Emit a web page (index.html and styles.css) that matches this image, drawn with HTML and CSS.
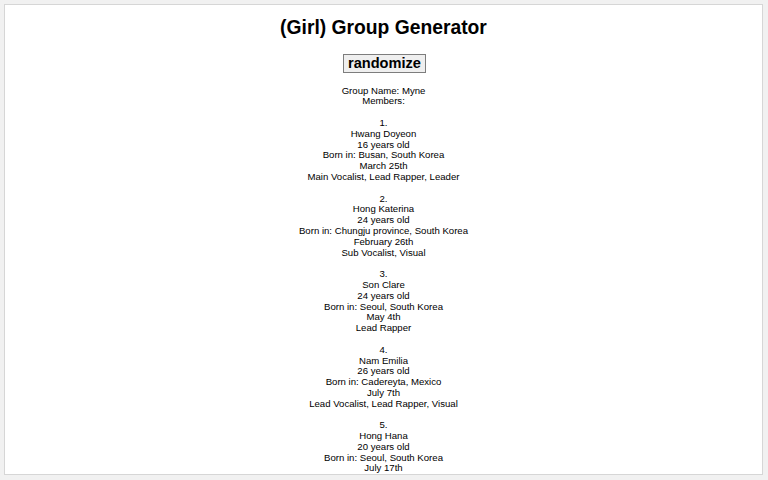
FILE: index.html
```html
<!DOCTYPE html>
<html lang="en">
<head>
<meta charset="utf-8">
<title>(Girl) Group Generator</title>
<link rel="stylesheet" href="styles.css">
</head>
<body>
<div class="frame">
  <h1 class="title">(Girl) Group Generator</h1>
  <div class="actions"><button class="btn" type="button">randomize</button></div>
  <div class="result">
    <div class="line">Group Name: Myne</div>
    <div class="line">Members:</div>
    <div class="member">
      <div class="line">1.</div>
      <div class="line">Hwang Doyeon</div>
      <div class="line">16 years old</div>
      <div class="line">Born in: Busan, South Korea</div>
      <div class="line">March 25th</div>
      <div class="line">Main Vocalist, Lead Rapper, Leader</div>
    </div>
    <div class="member">
      <div class="line">2.</div>
      <div class="line">Hong Katerina</div>
      <div class="line">24 years old</div>
      <div class="line">Born in: Chungju province, South Korea</div>
      <div class="line">February 26th</div>
      <div class="line">Sub Vocalist, Visual</div>
    </div>
    <div class="member">
      <div class="line">3.</div>
      <div class="line">Son Clare</div>
      <div class="line">24 years old</div>
      <div class="line">Born in: Seoul, South Korea</div>
      <div class="line">May 4th</div>
      <div class="line">Lead Rapper</div>
    </div>
    <div class="member">
      <div class="line">4.</div>
      <div class="line">Nam Emilia</div>
      <div class="line">26 years old</div>
      <div class="line">Born in: Cadereyta, Mexico</div>
      <div class="line">July 7th</div>
      <div class="line">Lead Vocalist, Lead Rapper, Visual</div>
    </div>
    <div class="member">
      <div class="line">5.</div>
      <div class="line">Hong Hana</div>
      <div class="line">20 years old</div>
      <div class="line">Born in: Seoul, South Korea</div>
      <div class="line">July 17th</div>
    </div>
  </div>
</div>
</body>
</html>
```

FILE: styles.css
```css
html, body {
  margin: 0;
  padding: 0;
  height: 100%;
}

body {
  background: #f1f1f1;
  font-family: "Liberation Sans", Arial, sans-serif;
  color: #000;
  overflow: hidden;
}

.frame {
  box-sizing: border-box;
  margin: 4px 5px 0 4px;
  height: 471px;
  border: 1px solid #d6d6d6;
  background: #fff;
  overflow: hidden;
  padding-top: 12px;
  text-align: center;
}

.title {
  margin: 0;
  font-size: 19.3px;
  line-height: 22px;
  font-weight: bold;
}

.actions {
  margin-top: 15px;
  display: flex;
  justify-content: center;
}

.btn {
  font-family: "Liberation Sans", Arial, sans-serif;
  font-size: 14.6px;
  font-weight: bold;
  line-height: 17px;
  padding: 0 4px;
  margin: 0 0 0 2px;
  border: 1px solid #7d7d7d;
  border-radius: 0;
  background: #efefef;
  color: #000;
}

.result {
  margin-top: 12.6px;
  font-size: 9.6px;
  line-height: 10.8px;
}

.member {
  margin-top: 10.8px;
}
```
